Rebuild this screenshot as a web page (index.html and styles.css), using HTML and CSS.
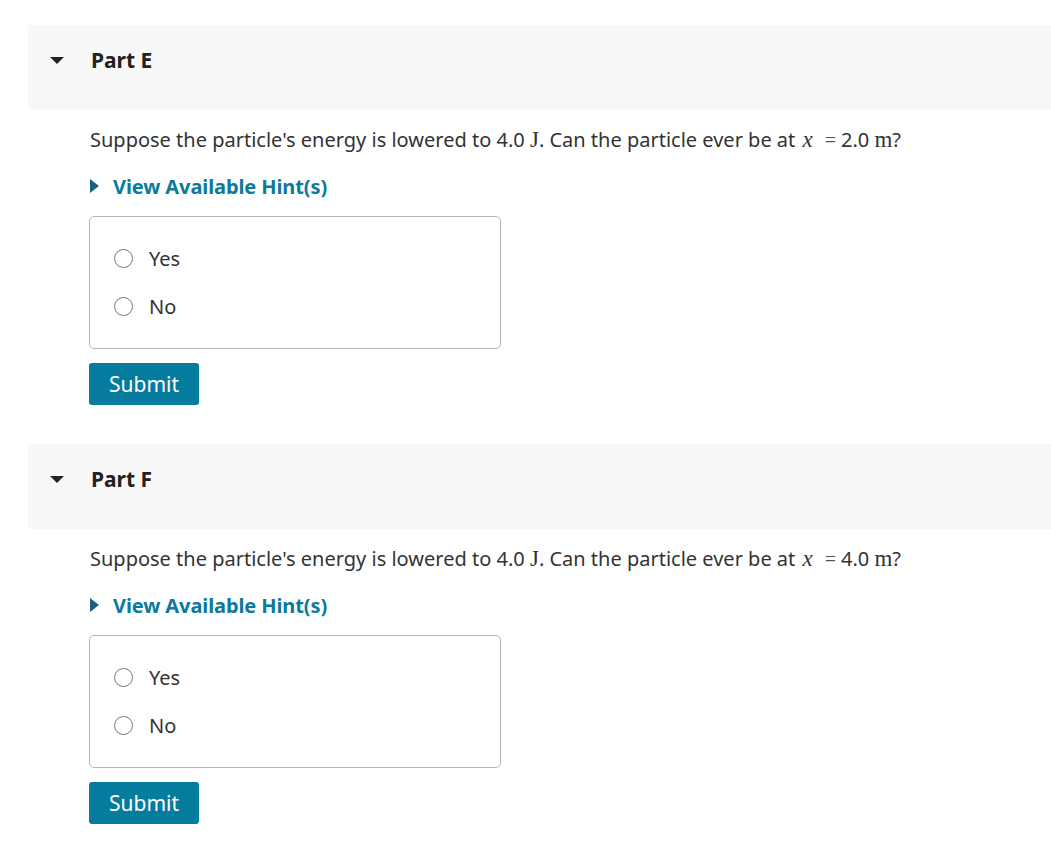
FILE: index.html
```html
<!DOCTYPE html>
<html>
<head>
<meta charset="utf-8">
<link rel="stylesheet" href="styles.css">
</head>
<body>
<section class="part">
  <div class="part-header">
    <span class="caret-down"></span>
    <h2 class="part-title">Part E</h2>
  </div>
  <div class="part-body">
    <p class="question">Suppose the particle's energy is lowered to 4.0 <span class="math">J</span>. Can the particle ever be at <span class="math var">x</span><span class="math eq">=</span>2.0 <span class="math">m</span>?</p>
    <div class="hint"><span class="caret-right"></span><span class="hint-text">View Available Hint(s)</span></div>
    <div class="choices">
      <label class="choice"><input type="radio" name="e"><span>Yes</span></label>
      <label class="choice"><input type="radio" name="e"><span>No</span></label>
    </div>
    <button class="submit">Submit</button>
  </div>
</section>
<section class="part">
  <div class="part-header">
    <span class="caret-down"></span>
    <h2 class="part-title">Part F</h2>
  </div>
  <div class="part-body">
    <p class="question">Suppose the particle's energy is lowered to 4.0 <span class="math">J</span>. Can the particle ever be at <span class="math var">x</span><span class="math eq">=</span>4.0 <span class="math">m</span>?</p>
    <div class="hint"><span class="caret-right"></span><span class="hint-text">View Available Hint(s)</span></div>
    <div class="choices">
      <label class="choice"><input type="radio" name="f"><span>Yes</span></label>
      <label class="choice"><input type="radio" name="f"><span>No</span></label>
    </div>
    <button class="submit">Submit</button>
  </div>
</section>
</body>
</html>
```
FILE: styles.css
```css
html, body {
  margin: 0;
  padding: 0;
  background: #ffffff;
}
body {
  padding: 25px 0 0 28px;
  font-family: "Noto Sans", "Open Sans", sans-serif;
  color: #333333;
  font-size: 20px;
}
.part {
  margin-bottom: 39px;
}
.part-header {
  height: 85px;
  box-sizing: border-box;
  background: #f8f8f8;
  display: flex;
  align-items: flex-start;
  padding: 20px 0 0 22px;
}
.caret-down {
  width: 0;
  height: 0;
  border-left: 7.5px solid transparent;
  border-right: 7.5px solid transparent;
  border-top: 7px solid #222222;
  margin-right: 27px;
  margin-top: 12px;
}
.part-title {
  margin: 0;
  font-size: 21px;
  font-weight: 700;
  color: #222222;
  line-height: 30px;
}
.part-body {
  padding-left: 61px;
}
.question {
  margin: 15px 0 0 0;
  line-height: 30px;
  height: 30px;
  white-space: nowrap;
  padding-left: 1px;
}
.math {
  font-family: "Liberation Serif", "DejaVu Serif", serif;
  font-size: 23px;
  line-height: 1;
}
.math.var {
  font-style: italic;
  margin-left: 2px;
}
.math.eq {
  color: #555555;
  font-size: 20px;
  margin: 0 5px 0 12px;
}
.hint {
  margin-top: 16px;
  height: 30px;
  display: flex;
  align-items: center;
  padding-left: 1px;
}
.caret-right {
  width: 0;
  height: 0;
  border-top: 7px solid transparent;
  border-bottom: 7px solid transparent;
  border-left: 9px solid #1d5f80;
  margin-right: 14px;
}
.hint-text {
  color: #0b7a9b;
  font-weight: 700;
  font-size: 20px;
  letter-spacing: -0.1px;
}
.choices {
  margin-top: 15px;
  width: 412px;
  box-sizing: border-box;
  border: 1px solid #b5b5b5;
  border-radius: 5px;
  padding: 26px 0 27px 24px;
  display: flex;
  flex-direction: column;
  gap: 18px;
}
.choice {
  display: flex;
  align-items: center;
  height: 30px;
}
.choice input {
  appearance: none;
  -webkit-appearance: none;
  margin: 0 16px 0 0;
  width: 19px;
  height: 19px;
  border: 1.5px solid #777777;
  border-radius: 50%;
  box-sizing: border-box;
  background: #ffffff;
}
.choice span {
  color: #333333;
  font-size: 20px;
}
.submit {
  display: block;
  margin-top: 14px;
  width: 110px;
  height: 42px;
  border: none;
  border-radius: 3px;
  background: #057b9d;
  color: #ffffff;
  font-family: "Noto Sans", "Open Sans", sans-serif;
  font-size: 21px;
  padding: 0;
}
```
